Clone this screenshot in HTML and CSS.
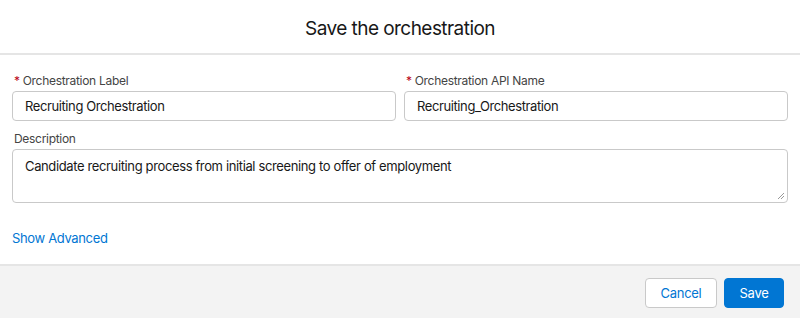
FILE: index.html
```html
<!DOCTYPE html>
<html>
<head>
<meta charset="utf-8">
<link rel="stylesheet" href="styles.css">
</head>
<body>
<div class="modal">
  <header class="modal-header">
    <h2 class="title">Save the orchestration</h2>
  </header>
  <div class="modal-body">
    <div class="row">
      <div class="field">
        <label class="label"><abbr class="req">*</abbr>Orchestration Label</label>
        <div class="input">Recruiting Orchestration</div>
      </div>
      <div class="field">
        <label class="label"><abbr class="req">*</abbr>Orchestration API Name</label>
        <div class="input">Recruiting_Orchestration</div>
      </div>
    </div>
    <div class="field">
      <label class="label">Description</label>
      <div class="textarea">Candidate recruiting process from initial screening to offer of employment
        <svg class="grip" width="8" height="8" viewBox="0 0 8 8"><path d="M7 1 L1 7 M7 4 L4 7" stroke="#999" stroke-width="1" fill="none"/></svg>
      </div>
    </div>
    <a class="link">Show Advanced</a>
  </div>
  <footer class="modal-footer">
    <button class="btn btn-neutral">Cancel</button>
    <button class="btn btn-brand">Save</button>
  </footer>
</div>
</body>
</html>
```
FILE: styles.css
```css
* { box-sizing: border-box; }
html, body { margin: 0; padding: 0; background: #fff; }
body {
  font-family: Inter, "Liberation Sans", sans-serif;
  color: #181818;
  width: 800px;
  height: 318px;
  overflow: hidden;
}
.modal { display: flex; flex-direction: column; height: 318px; }
.modal-header {
  height: 55px;
  border-bottom: 2px solid #e5e5e5;
  display: flex;
  align-items: center;
  justify-content: center;
}
.title { margin: 0; font-size: 19px; font-weight: 400; letter-spacing: -0.55px; padding-top: 3px; }
.modal-body { padding: 18px 12px 0 12px; flex: 1; }
.row { display: flex; gap: 8px; }
.row .field { flex: 1; }
.field { margin-bottom: 10px; }
.label {
  display: block;
  font-size: 12px;
  letter-spacing: -0.3px;
  color: #444;
  height: 18px;
  line-height: 16px;
  padding-left: 2px;
}
.req { color: #ba0517; text-decoration: none; margin-right: 3px; font-size: 12px; }
.input {
  height: 30px;
  border: 1px solid #c9c9c9;
  border-radius: 4px;
  font-size: 13px;
  letter-spacing: -0.4px;
  line-height: 28px;
  padding-left: 12px;
}
.textarea {
  position: relative;
  height: 54px;
  border: 1px solid #c9c9c9;
  border-radius: 4px;
  font-size: 13px;
  letter-spacing: -0.37px;
  padding: 8px 12px;
}
.grip { position: absolute; right: 2px; bottom: 2px; }
.link {
  display: inline-block;
  margin-top: 17px;
  font-size: 13px;
  letter-spacing: -0.35px;
  color: #0176d3;
}
.modal-footer {
  height: 54px;
  background: #f3f3f3;
  border-top: 2px solid #e5e5e5;
  display: flex;
  justify-content: flex-end;
  align-items: center;
  gap: 7px;
  padding-right: 16px;
  padding-top: 1px;
}
.btn {
  height: 30px;
  border-radius: 4px;
  font-family: inherit;
  font-size: 13px;
  letter-spacing: -0.3px;
  padding: 0;
}
.btn-neutral { width: 72px; background: #fff; border: 1px solid #c9c9c9; color: #0176d3; }
.btn-brand { width: 60px; background: #0176d3; border: 1px solid #0176d3; color: #fff; }
```
